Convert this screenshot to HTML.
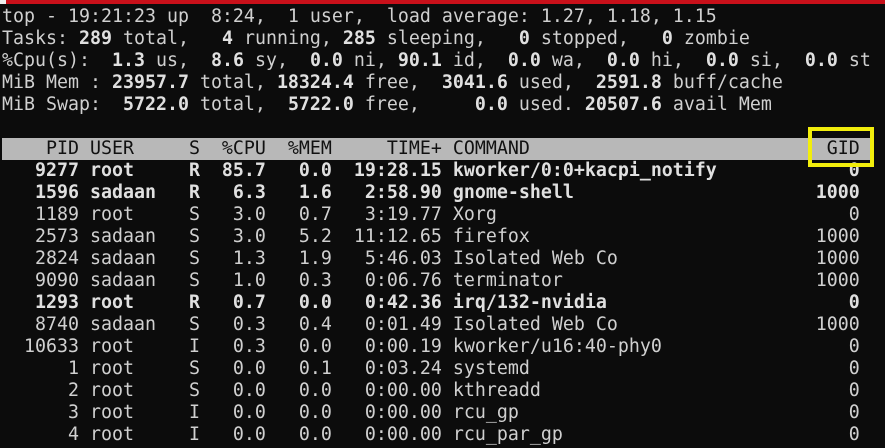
<!DOCTYPE html>
<html><head><meta charset="utf-8"><style>
html,body{margin:0;padding:0;background:#0c0c0c;width:885px;height:448px;overflow:hidden}
.bar{position:absolute;left:0;top:0;width:885px;height:4px;background:#c8101a}
.w{position:absolute;left:0;top:0;width:6px;height:4px;background:#eee}
pre{position:absolute;left:2px;top:6px;margin:0;font-family:"DejaVu Sans Mono","Liberation Mono",monospace;font-size:18.27px;line-height:22px;color:#d0d0d0;white-space:pre}
b{font-weight:bold;color:#e0e0e0}
.hd{background:#b8b8b8;color:#111;display:inline-block;width:868px}
.box{position:absolute;left:808px;top:127px;width:58px;height:32px;border:4px solid #f2ee0c}
</style></head><body>
<div class="bar"></div><div class="w"></div>
<pre>top - 19:21:23 up  8:24,  1 user,  load average: 1.27, 1.18, 1.15
Tasks: <b>289</b> total,   <b>4</b> running, <b>285</b> sleeping,   <b>0</b> stopped,   <b>0</b> zombie
%Cpu(s):  <b>1.3</b> us,  <b>8.6</b> sy,  <b>0.0</b> ni, <b>90.1</b> id,  <b>0.0</b> wa,  <b>0.0</b> hi,  <b>0.0</b> si,  <b>0.0</b> st
MiB Mem : <b>23957.7</b> total, <b>18324.4</b> free,  <b>3041.6</b> used,  <b>2591.8</b> buff/cache
MiB Swap:  <b>5722.0</b> total,  <b>5722.0</b> free,     <b>0.0</b> used. <b>20507.6</b> avail Mem

<span class="hd">    PID USER     S  %CPU  %MEM     TIME+ COMMAND                           GID</span>
<b>   9277 root     R  85.7   0.0  19:28.15 kworker/0:0+kacpi_notify            0</b>
<b>   1596 sadaan   R   6.3   1.6   2:58.90 gnome-shell                      1000</b>
   1189 root     S   3.0   0.7   3:19.77 Xorg                                0
   2573 sadaan   S   3.0   5.2  11:12.65 firefox                          1000
   2824 sadaan   S   1.3   1.9   5:46.03 Isolated Web Co                  1000
   9090 sadaan   S   1.0   0.3   0:06.76 terminator                       1000
<b>   1293 root     R   0.7   0.0   0:42.36 irq/132-nvidia                      0</b>
   8740 sadaan   S   0.3   0.4   0:01.49 Isolated Web Co                  1000
  10633 root     I   0.3   0.0   0:00.19 kworker/u16:40-phy0                 0
      1 root     S   0.0   0.1   0:03.24 systemd                             0
      2 root     S   0.0   0.0   0:00.00 kthreadd                            0
      3 root     I   0.0   0.0   0:00.00 rcu_gp                              0
      4 root     I   0.0   0.0   0:00.00 rcu_par_gp                          0</pre>
<div class="box"></div>
</body></html>
